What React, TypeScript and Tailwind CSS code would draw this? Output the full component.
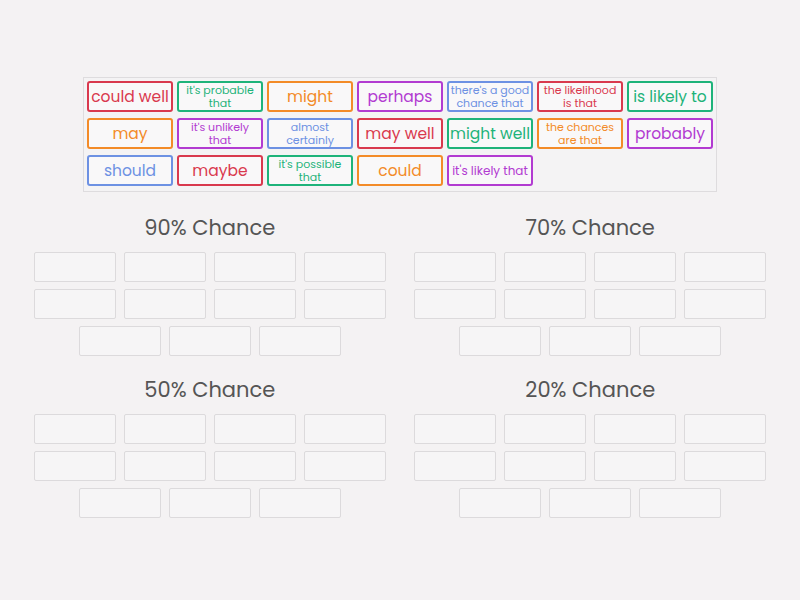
const palette = [
  "border-[#d9394e] text-[#d9394e]",
  "border-[#1eb37a] text-[#1eb37a]",
  "border-[#f38b28] text-[#f38b28]",
  "border-[#b23bd1] text-[#b23bd1]",
  "border-[#6d91e3] text-[#6d91e3]",
];

interface Tile {
  lines: string[];
  size: "lg" | "sm" | "md";
}

const tiles: Tile[] = [
  { lines: ["could well"], size: "lg" },
  { lines: ["it's probable", "that"], size: "sm" },
  { lines: ["might"], size: "lg" },
  { lines: ["perhaps"], size: "lg" },
  { lines: ["there's a good", "chance that"], size: "sm" },
  { lines: ["the likelihood", "is that"], size: "sm" },
  { lines: ["is likely to"], size: "lg" },
  { lines: ["may"], size: "lg" },
  { lines: ["it's unlikely", "that"], size: "sm" },
  { lines: ["almost", "certainly"], size: "sm" },
  { lines: ["may well"], size: "lg" },
  { lines: ["might well"], size: "lg" },
  { lines: ["the chances", "are that"], size: "sm" },
  { lines: ["probably"], size: "lg" },
  { lines: ["should"], size: "lg" },
  { lines: ["maybe"], size: "lg" },
  { lines: ["it's possible", "that"], size: "sm" },
  { lines: ["could"], size: "lg" },
  { lines: ["it's likely that"], size: "md" },
];

const groups = ["90% Chance", "70% Chance", "50% Chance", "20% Chance"];

const sizeClass = {
  lg: "text-[15.5px] leading-[18px]",
  md: "text-[12px] leading-[14px]",
  sm: "text-[11px] leading-[13px]",
};

function Group({ title }: { title: string }) {
  return (
    <div className="flex flex-col items-center">
      <h2 className="h-[28px] text-[21px] leading-[28px] text-[#555555]">
        {title}
      </h2>
      <div className="mt-[10px] flex w-[352px] flex-wrap justify-center gap-x-[8px] gap-y-[7px]">
        {Array.from({ length: 11 }).map((_, i) => (
          <div
            key={i}
            className="h-[30px] w-[82px] rounded-[2px] border border-[#dcdadc] bg-[#f6f5f6]"
          />
        ))}
      </div>
    </div>
  );
}

export default function App() {
  return (
    <div
      className="h-[600px] w-[800px] overflow-hidden bg-[#f4f2f3]"
      style={{ fontFamily: "Poppins, 'Open Sans', 'Noto Sans', sans-serif" }}
    >
      <div className="mx-auto mt-[77px] h-[115px] w-[634px] border border-[#dedcde] bg-[#f4f3f4] pl-[3px] pt-[3px]">
        <div className="grid grid-cols-[repeat(7,86px)] gap-x-[4px] gap-y-[6px]">
          {tiles.map((t, i) => (
            <div
              key={t.lines.join(" ")}
              className={`flex h-[31px] flex-col items-center justify-center whitespace-nowrap rounded-[3px] border-2 bg-[#f9f8f9] text-center ${palette[i % 5]} ${sizeClass[t.size]}`}
            >
              {t.lines.map((l) => (
                <span key={l}>{l}</span>
              ))}
            </div>
          ))}
        </div>
      </div>
      <div className="mx-auto mt-[22px] grid w-[732px] grid-cols-2 gap-x-[29px] gap-y-[20px]">
        {groups.map((g) => (
          <Group key={g} title={g} />
        ))}
      </div>
    </div>
  );
}
